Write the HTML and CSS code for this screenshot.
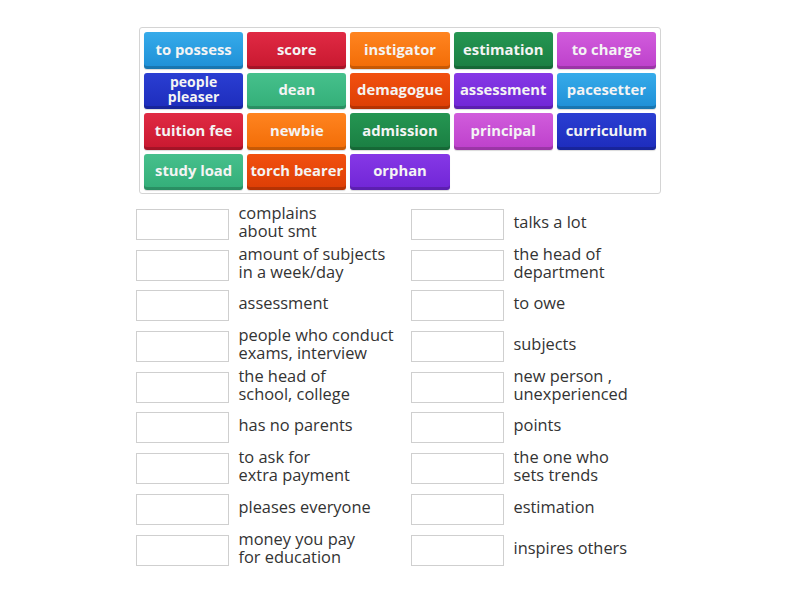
FILE: index.html
```html
<!DOCTYPE html>
<html>
<head>
<meta charset="utf-8">
<link rel="stylesheet" href="styles.css">
</head>
<body>
<div class="bank">
  <div class="tile blue">to possess</div>
  <div class="tile red">score</div>
  <div class="tile orange">instigator</div>
  <div class="tile dgreen">estimation</div>
  <div class="tile pink">to charge</div>
  <div class="tile navy two">people<br>pleaser</div>
  <div class="tile lgreen">dean</div>
  <div class="tile vermil">demagogue</div>
  <div class="tile purple">assessment</div>
  <div class="tile blue">pacesetter</div>
  <div class="tile red">tuition fee</div>
  <div class="tile orange">newbie</div>
  <div class="tile dgreen">admission</div>
  <div class="tile pink">principal</div>
  <div class="tile navy">curriculum</div>
  <div class="tile lgreen">study load</div>
  <div class="tile vermil">torch bearer</div>
  <div class="tile purple">orphan</div>
</div>

<div class="list">
  <div class="item"><div class="box"></div><div class="label">complains<br>about smt</div></div>
  <div class="item"><div class="box"></div><div class="label">talks a lot</div></div>
  <div class="item"><div class="box"></div><div class="label">amount of subjects<br>in a week/day</div></div>
  <div class="item"><div class="box"></div><div class="label">the head of<br>department</div></div>
  <div class="item"><div class="box"></div><div class="label">assessment</div></div>
  <div class="item"><div class="box"></div><div class="label">to owe</div></div>
  <div class="item"><div class="box"></div><div class="label">people who conduct<br>exams, interview</div></div>
  <div class="item"><div class="box"></div><div class="label">subjects</div></div>
  <div class="item"><div class="box"></div><div class="label">the head of<br>school, college</div></div>
  <div class="item"><div class="box"></div><div class="label">new person ,<br>unexperienced</div></div>
  <div class="item"><div class="box"></div><div class="label">has no parents</div></div>
  <div class="item"><div class="box"></div><div class="label">points</div></div>
  <div class="item"><div class="box"></div><div class="label">to ask for<br>extra payment</div></div>
  <div class="item"><div class="box"></div><div class="label">the one who<br>sets trends</div></div>
  <div class="item"><div class="box"></div><div class="label">pleases everyone</div></div>
  <div class="item"><div class="box"></div><div class="label">estimation</div></div>
  <div class="item"><div class="box"></div><div class="label">money you pay<br>for education</div></div>
  <div class="item"><div class="box"></div><div class="label">inspires others</div></div>
</div>
</body>
</html>
```

FILE: styles.css
```css
html, body {
  margin: 0;
  padding: 0;
  background: #ffffff;
}
body {
  font-family: "Open Sans", "Liberation Sans", sans-serif;
  padding-top: 27px;
}
.bank {
  width: 512px;
  margin: 0 auto;
  border: 1px solid #d4d4d4;
  border-radius: 3px;
  padding: 4px 4px 3px 4px;
  display: grid;
  grid-template-columns: repeat(5, 1fr);
  grid-auto-rows: 36.5px;
  gap: 4px 4px;
}
.tile {
  border-radius: 3px;
  color: #f4f4f4;
  font-weight: 700;
  font-size: 14.8px;
  display: flex;
  align-items: center;
  justify-content: center;
  text-align: center;
  line-height: 16px;
  padding-bottom: 3px;
  box-shadow: inset 0 -3px 0 rgba(0,0,0,0.18), 0 1px 1px rgba(0,0,0,0.15);
  white-space: nowrap;
}
.tile.two { font-size: 14px; line-height: 15px; padding-bottom: 3px; }
.blue   { background: linear-gradient(#36abea, #1e8fd6); }
.red    { background: linear-gradient(#e02a44, #c8182f); }
.orange { background: linear-gradient(#ff8420, #f26c06); }
.dgreen { background: linear-gradient(#259652, #1a7e42); }
.pink   { background: linear-gradient(#d15cdc, #bd40cb); }
.navy   { background: linear-gradient(#2a3ed2, #1d2cbc); }
.lgreen { background: linear-gradient(#46c08c, #33ae78); }
.vermil { background: linear-gradient(#f2500f, #dc3e05); }
.purple { background: linear-gradient(#8638e6, #7026d6); }

.list {
  width: 528px;
  margin: 15px auto 0 auto;
  display: grid;
  grid-template-columns: 275px 1fr;
  grid-auto-rows: 31px;
  row-gap: 9.7px;
}
.item {
  display: flex;
  align-items: center;
}
.box {
  width: 91px;
  height: 29px;
  border: 1px solid #cfcfcf;
  flex: none;
  margin-right: 9.5px;
  background: #fff;
}
.label {
  font-size: 16.4px;
  line-height: 18px;
  color: #333333;
  white-space: nowrap;
  padding-bottom: 5px;
}
```
